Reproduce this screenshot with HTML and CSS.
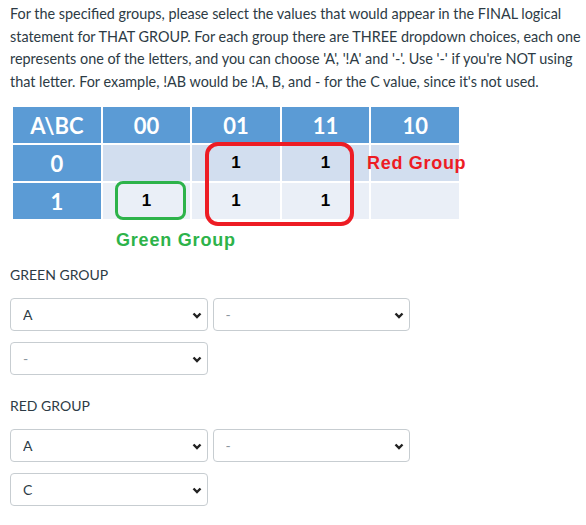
FILE: index.html
```html
<!DOCTYPE html>
<html lang="en">
<head>
  <meta charset="UTF-8">
  <title>K-Map Groups</title>
  <link rel="stylesheet" href="styles.css">
</head>
<body>

  <p class="intro">For the specified groups, please select the values that would appear in the FINAL logical statement for THAT GROUP. For each group there are THREE dropdown choices, each one represents one of the letters, and you can choose 'A', '!A' and '-'. Use '-' if you're NOT using that letter. For example, !AB would be !A, B, and - for the C value, since it's not used.</p>

  <!-- k-map -->
  <div class="kmap">
    <div class="kmap-grid">
      <div class="cell head">A\BC</div>
      <div class="cell head">00</div>
      <div class="cell head">01</div>
      <div class="cell head">11</div>
      <div class="cell head">10</div>

      <div class="cell head">0</div>
      <div class="cell row-a"></div>
      <div class="cell row-a">1</div>
      <div class="cell row-a">1</div>
      <div class="cell row-a"></div>

      <div class="cell head">1</div>
      <div class="cell row-b">1</div>
      <div class="cell row-b">1</div>
      <div class="cell row-b">1</div>
      <div class="cell row-b"></div>
    </div>

    <div class="loop loop-green"></div>
    <div class="loop loop-red"></div>
    <div class="loop-label label-green">Green Group</div>
    <div class="loop-label label-red">Red Group</div>
  </div>

  <!-- dropdowns -->
  <div class="group">
    <div class="group-title">GREEN GROUP</div>
    <div class="picks">
      <label class="pick">
        <select><option>A</option><option>!A</option><option>-</option></select>
        <svg class="chev" width="10" height="7" viewBox="0 0 10 7"><path d="M1.5 1.5 L5 5 L8.5 1.5" fill="none" stroke="#222" stroke-width="2.4"/></svg>
      </label>
      <label class="pick">
        <select class="dash"><option>-</option><option>B</option><option>!B</option></select>
        <svg class="chev" width="10" height="7" viewBox="0 0 10 7"><path d="M1.5 1.5 L5 5 L8.5 1.5" fill="none" stroke="#222" stroke-width="2.4"/></svg>
      </label>
      <label class="pick">
        <select class="dash"><option>-</option><option>C</option><option>!C</option></select>
        <svg class="chev" width="10" height="7" viewBox="0 0 10 7"><path d="M1.5 1.5 L5 5 L8.5 1.5" fill="none" stroke="#222" stroke-width="2.4"/></svg>
      </label>
    </div>
  </div>

  <div class="group">
    <div class="group-title">RED GROUP</div>
    <div class="picks">
      <label class="pick">
        <select><option>A</option><option>!A</option><option>-</option></select>
        <svg class="chev" width="10" height="7" viewBox="0 0 10 7"><path d="M1.5 1.5 L5 5 L8.5 1.5" fill="none" stroke="#222" stroke-width="2.4"/></svg>
      </label>
      <label class="pick">
        <select class="dash"><option>-</option><option>B</option><option>!B</option></select>
        <svg class="chev" width="10" height="7" viewBox="0 0 10 7"><path d="M1.5 1.5 L5 5 L8.5 1.5" fill="none" stroke="#222" stroke-width="2.4"/></svg>
      </label>
      <label class="pick">
        <select><option>C</option><option>!C</option><option>-</option></select>
        <svg class="chev" width="10" height="7" viewBox="0 0 10 7"><path d="M1.5 1.5 L5 5 L8.5 1.5" fill="none" stroke="#222" stroke-width="2.4"/></svg>
      </label>
    </div>
  </div>

</body>
</html>
```

FILE: styles.css
```css
body {
  margin: 0;
  padding: 3px 4px 0 10px;
  font-family: Lato, "Open Sans", sans-serif;
  font-size: 14px;
  color: #2d3b45;
  background: #fff;
}

.intro {
  margin: 0;
  font-size: 14.4px;
  line-height: 22.6px;
}

/* k-map */
.kmap {
  position: relative;
  margin: 14px 0 0 3px;
  height: 146px;
}

.kmap-grid {
  display: grid;
  grid-template-columns: repeat(5, 87.6px);
  grid-auto-rows: 36px;
  gap: 2px;
}

.cell {
  display: flex;
  align-items: center;
  justify-content: center;
  font-family: "Liberation Sans", Arial, sans-serif;
  font-weight: bold;
  font-size: 17px;
  color: #000;
}

.cell.head {
  background: #5b9bd5;
  color: #fff;
  font-family: Lato, sans-serif;
  font-size: 22px;
}

.row-a {
  background: #d2deef;
}

.row-b {
  background: #eaeff7;
}

.loop {
  position: absolute;
  box-sizing: border-box;
  border-style: solid;
}

.loop-green {
  left: 102px;
  top: 74px;
  width: 71px;
  height: 39px;
  border-width: 3px;
  border-color: #2db34a;
  border-radius: 8px;
}

.loop-red {
  left: 192px;
  top: 35px;
  width: 149px;
  height: 84px;
  border-width: 4px;
  border-color: #ed1c24;
  border-radius: 13px;
}

.loop-label {
  position: absolute;
  font-family: "Liberation Sans", Arial, sans-serif;
  font-weight: bold;
  font-size: 18px;
  line-height: 20px;
  white-space: nowrap;
}

.label-green {
  left: 103px;
  top: 123px;
  letter-spacing: 0.8px;
  color: #2db34a;
}

.label-red {
  left: 354px;
  top: 46px;
  letter-spacing: 0.7px;
  color: #ed1c24;
}

/* dropdown groups */
.group {
  margin-top: 11px;
}

.group + .group {
  margin-top: 20px;
}

.group-title {
  line-height: 22px;
  margin-bottom: 12px;
}

.picks {
  display: flex;
  flex-wrap: wrap;
  width: 401px;
  gap: 11px 5px;
}

.pick {
  position: relative;
  width: 197.5px;
  height: 33px;
}

.pick select {
  appearance: none;
  -webkit-appearance: none;
  box-sizing: border-box;
  width: 100%;
  height: 100%;
  padding: 0 24px 0 12px;
  border: 1px solid #c7cdd1;
  border-radius: 4px;
  background: #fff;
  font-family: Lato, sans-serif;
  font-size: 14px;
  color: #2d3b45;
}

.pick select.dash {
  color: #8b969e;
}

.chev {
  position: absolute;
  right: 6px;
  top: 14px;
  pointer-events: none;
}
```
